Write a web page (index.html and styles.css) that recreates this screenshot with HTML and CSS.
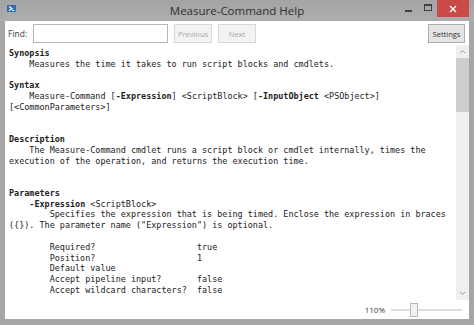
FILE: index.html
```html
<!DOCTYPE html>
<html lang="en">
<head>
    <meta charset="UTF-8">
    <title>Measure-Command Help</title>
    <link rel="stylesheet" href="styles.css">
</head>
<body>
    <div class="window">
        <div class="titlebar">
            <div class="app-icon">
                <svg width="9" height="7" viewBox="0 0 9 7">
                    <rect width="9" height="7" fill="#2f6db3"/>
                    <path d="M2 1.5 L5 3.5 L2 5.5" stroke="#fff" stroke-width="1.2" fill="none"/>
                    <path d="M5 5.5 H7.5" stroke="#fff" stroke-width="1"/>
                </svg>
            </div>
            <div class="title">Measure-Command Help</div>
            <div class="controls">
                <span class="ctl-min"></span>
                <span class="ctl-max"></span>
                <span class="ctl-close">
                    <svg width="8" height="8" viewBox="0 0 8 8">
                        <path d="M1 1 L7 7 M7 1 L1 7" stroke="#fff" stroke-width="1.4"/>
                    </svg>
                </span>
            </div>
        </div>

        <div class="client">
            <div class="toolbar">
                <label class="find-label">Find:</label>
                <input type="text" class="find-input">
                <button class="btn" disabled>Previous</button>
                <button class="btn" disabled>Next</button>
                <button class="btn btn-settings">Settings</button>
            </div>

            <div class="main">
<pre class="help-text"><b>Synopsis</b>
    Measures the time it takes to run script blocks and cmdlets.

<b>Syntax</b>
    Measure-Command [<b>-Expression</b>] &lt;ScriptBlock&gt; [<b>-InputObject</b> &lt;PSObject&gt;]
[&lt;CommonParameters&gt;]


<b>Description</b>
    The Measure-Command cmdlet runs a script block or cmdlet internally, times the
execution of the operation, and returns the execution time.


<b>Parameters</b>
    <b>-Expression</b> &lt;ScriptBlock&gt;
        Specifies the expression that is being timed. Enclose the expression in braces
({}). The parameter name ("Expression") is optional.

        Required?                    true
        Position?                    1
        Default value
        Accept pipeline input?       false
        Accept wildcard characters?  false</pre>
                <div class="scrollbar">
                    <div class="arrow">
                        <svg width="7" height="5" viewBox="0 0 7 5"><path d="M1 4 L3.5 1.5 L6 4" stroke="#9a9a9a" fill="none"/></svg>
                    </div>
                    <div class="thumb"></div>
                    <div class="track"></div>
                    <div class="arrow">
                        <svg width="7" height="5" viewBox="0 0 7 5"><path d="M1 1 L3.5 3.5 L6 1" stroke="#9a9a9a" fill="none"/></svg>
                    </div>
                </div>
            </div>

            <div class="statusbar">
                <span class="zoom-label">110%</span>
                <div class="slider">
                    <span class="slider-track left"></span>
                    <span class="slider-thumb"></span>
                    <span class="slider-track right"></span>
                </div>
            </div>
        </div>
    </div>
</body>
</html>
```

FILE: styles.css
```css
html, body {
    margin: 0;
    padding: 0;
}
body {
    width: 474px;
    height: 325px;
    overflow: hidden;
    background-color: #a6a6a6;
    font-family: "Open Sans", "Noto Sans", sans-serif;
}
.window {
    display: flex;
    flex-direction: column;
    height: 325px;
}

/* title bar */
.titlebar {
    display: grid;
    grid-template-columns: 1fr auto 1fr;
    align-items: start;
    height: 21px;
    background: linear-gradient(#a4a4a4, #adadad);
}
.app-icon {
    padding: 5px 0 0 7px;
    line-height: 0;
}
.title {
    padding-top: 3px;
    font-size: 11.5px;
    line-height: 15px;
    color: #303030;
}
.controls {
    display: flex;
    justify-content: flex-end;
    align-items: flex-start;
    padding-right: 5px;
}
.ctl-min {
    width: 7px;
    height: 2px;
    margin-top: 10px;
    background-color: #404040;
}
.ctl-max {
    width: 6px;
    height: 4px;
    margin: 4px 0 0 12px;
    border: 1px solid #404040;
    border-top-width: 2px;
}
.ctl-close {
    display: flex;
    align-items: center;
    justify-content: center;
    width: 32px;
    height: 17px;
    margin-left: 5px;
    background-color: #c94a47;
}

/* client area */
.client {
    flex: 1;
    display: flex;
    flex-direction: column;
    margin: 0 5px 6px 5px;
    background: white;
}
.toolbar {
    display: flex;
    align-items: center;
    height: 19px;
    padding: 3px 4px 0 3px;
}
.find-label {
    width: 25px;
    font-size: 8.5px;
    color: #3c3c3c;
}
.find-input {
    width: 135px;
    height: 19px;
    box-sizing: border-box;
    margin: 0;
    border: 1px solid #b4b6bc;
}
.btn {
    width: 38px;
    height: 19px;
    box-sizing: border-box;
    margin-left: 6px;
    padding: 0;
    font-family: "Open Sans", "Noto Sans", sans-serif;
    font-size: 7.5px;
    background-color: #f3f3f3;
    border: 1px solid #d8d8d8;
    color: #a8a8a8;
}
.btn-settings {
    width: 37px;
    margin-left: auto;
    background-color: #e4e4e4;
    border-color: #adadad;
    color: #333;
}

.main {
    flex: 1;
    display: flex;
    margin-top: 2px;
    min-height: 0;
}
.help-text {
    flex: 1;
    margin: 0;
    padding: 3px 0 0 4px;
    overflow: hidden;
    font-family: "DejaVu Sans Mono", "Liberation Mono", monospace;
    font-size: 8.45px;
    line-height: 10.77px;
    color: #222;
}
.help-text b {
    font-weight: bold;
}

.scrollbar {
    width: 13px;
    display: flex;
    flex-direction: column;
    background-color: #f0f0f0;
}
.arrow {
    height: 13px;
    display: flex;
    align-items: center;
    justify-content: center;
}
.thumb {
    height: 54px;
    background-color: #cdcdcd;
}
.track {
    flex: 1;
}

.statusbar {
    display: flex;
    align-items: center;
    justify-content: flex-end;
    height: 19px;
    padding-right: 7px;
}
.zoom-label {
    font-size: 8px;
    color: #3a3a3a;
    margin-right: 6px;
}
.slider {
    display: flex;
    align-items: center;
    width: 71px;
}
.slider-track {
    height: 2px;
    background-color: #dedede;
}
.slider-track.left {
    width: 19px;
}
.slider-track.right {
    flex: 1;
}
.slider-thumb {
    width: 8px;
    height: 14px;
    box-sizing: border-box;
    background-color: #f2f2f2;
    border: 1px solid #b8b8b8;
}
```
